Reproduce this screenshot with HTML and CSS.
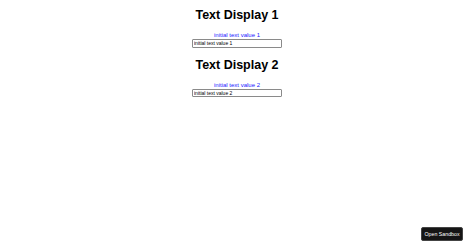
FILE: index.html
```html
<!DOCTYPE html>
<html>
<head>
<meta charset="utf-8">
<link rel="stylesheet" href="styles.css">
</head>
<body>
<main class="app">
  <section class="block">
    <h1 class="title">Text Display 1</h1>
    <div class="label">initial text value 1</div>
    <input class="field" type="text" value="initial text value 1">
  </section>
  <section class="block">
    <h1 class="title">Text Display 2</h1>
    <div class="label">initial text value 2</div>
    <input class="field" type="text" value="initial text value 2">
  </section>
</main>
<a class="sandbox-btn">Open Sandbox</a>
</body>
</html>
```
FILE: styles.css
```css
html, body {
  margin: 0;
  padding: 0;
  background: #ffffff;
}
body {
  font-family: "Liberation Sans", Arial, sans-serif;
  width: 474px;
  height: 248px;
  overflow: hidden;
}
.app {
  display: flex;
  flex-direction: column;
  align-items: center;
  padding-top: 8px;
  gap: 10px;
}
.block {
  display: flex;
  flex-direction: column;
  align-items: center;
}
.title {
  margin: 0 0 10px 0;
  font-size: 12.5px;
  line-height: 14px;
  font-weight: bold;
  color: #000;
}
.label {
  font-size: 6px;
  line-height: 7px;
  color: #1a1aff;
}
.field {
  box-sizing: border-box;
  width: 90px;
  height: 8.5px;
  margin: 0;
  padding: 0 1px;
  border: 0.5px solid #8a8a8a;
  border-radius: 1px;
  font-family: "Liberation Sans", Arial, sans-serif;
  font-size: 5px;
  line-height: 7px;
  color: #000;
  background: #fff;
  outline: none;
}
.sandbox-btn {
  position: fixed;
  right: 11px;
  bottom: 7px;
  width: 42px;
  height: 14px;
  box-sizing: border-box;
  display: flex;
  align-items: center;
  justify-content: center;
  background: #151515;
  border: 0.5px solid #444;
  border-radius: 2px;
  color: #fff;
  font-size: 5.25px;
  text-decoration: none;
}
```
